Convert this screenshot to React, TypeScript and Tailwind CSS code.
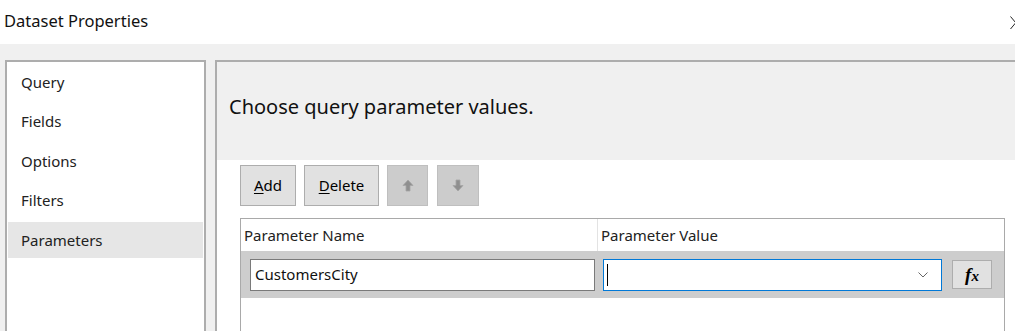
import React from "react";

const font = { fontFamily: '"Noto Sans", "Segoe UI", sans-serif' };

function Arrow({ up }: { up: boolean }) {
  return (
    <svg width="12" height="13" viewBox="0 0 12 13" className={up ? "" : "rotate-180"}>
      <path d="M6 1 L11 6.5 L8 6.5 L8 12 L4 12 L4 6.5 L1 6.5 Z" fill="#8f8f8f" stroke="#a5a5a5" strokeWidth="0.8" />
    </svg>
  );
}

export default function App() {
  const items = ["Query", "Fields", "Options", "Filters", "Parameters"];
  return (
    <div className="w-[1015px] h-[331px] overflow-hidden bg-[#f0f0f0] flex flex-col text-black" style={font}>
      <div className="h-[44px] shrink-0 bg-white flex items-center pl-[4px]">
        <span className="text-[16.5px] leading-none pb-[1px] text-[#111]">Dataset Properties</span>
        <svg width="12" height="14" viewBox="0 0 12 14" className="ml-auto mr-[-7px] mt-[1px]" >
          <path d="M0.5 0.5 L11 13 M11 0.5 L0.5 13" stroke="#222" strokeWidth="1" fill="none" />
        </svg>
      </div>
      <div className="flex-1 flex pt-[16px] pl-[5px] gap-[9px] min-h-0">
        <div className="w-[201px] shrink-0 bg-white border-2 border-[#adadad] border-b-0 flex flex-col gap-[3.5px] pt-[2px] px-[1px]">
          {items.map((it) => (
            <div
              key={it}
              className={`h-[36px] flex items-center pl-[13px] text-[15px] text-[#222] ${it === "Parameters" ? "bg-[#e6e6e6]" : ""}`}
            >
              {it}
            </div>
          ))}
        </div>
        <div className="flex-1 min-w-0 border-2 border-r-0 border-b-0 border-[#adadad] flex flex-col mr-[-20px]">
          <div className="h-[98px] shrink-0 bg-[#f0f0f0] flex items-center pl-[12px] pb-[8px]">
            <span className="text-[20px] text-[#111]">Choose query parameter values.</span>
          </div>
          <div className="flex-1 bg-white pl-[23px] pt-[5px] flex flex-col">
            <div className="flex h-[41px]">
              <button className="w-[56px] h-[41px] bg-[#e1e1e1] border border-[#adadad] text-[15px] flex items-center justify-center">
                <span><span className="underline underline-offset-2">A</span>dd</span>
              </button>
              <button className="ml-[8px] w-[75px] h-[41px] bg-[#e1e1e1] border border-[#adadad] text-[15px] flex items-center justify-center">
                <span><span className="underline underline-offset-2">D</span>elete</span>
              </button>
              <button className="ml-[8px] w-[41px] h-[41px] bg-[#cccccc] border border-[#bfbfbf] flex items-center justify-center">
                <Arrow up />
              </button>
              <button className="ml-[9px] w-[42px] h-[41px] bg-[#cccccc] border border-[#bfbfbf] flex items-center justify-center">
                <Arrow up={false} />
              </button>
            </div>
            <div className="mt-[12px] w-[765px] flex-1 border border-b-0 border-[#a9a9a9] flex flex-col">
              <div className="h-[32px] flex shrink-0">
                <div className="w-[357px] border-r border-[#e3e3e3] pl-[3px] flex items-center text-[15px] text-[#222]">Parameter Name</div>
                <div className="flex-1 pl-[3px] flex items-center text-[15px] text-[#222]">Parameter Value</div>
              </div>
              <div className="h-[47px] bg-[#cdcdcd] flex items-center shrink-0">
                <div className="ml-[9px] w-[345px] h-[32px] bg-white border border-[#7a7a7a] flex items-center pl-[4px] text-[15px] text-[#111]">
                  CustomersCity
                </div>
                <div className="ml-[8px] w-[339px] h-[32px] bg-white border border-[#0078d7] flex items-center pl-[3px]">
                  <div className="w-[1px] h-[22px] bg-black" />
                  <svg width="10" height="6" viewBox="0 0 10 6" className="ml-auto mr-[13px]">
                    <path d="M0.5 0.5 L5 5 L9.5 0.5" stroke="#666" strokeWidth="1" fill="none" />
                  </svg>
                </div>
                <button className="ml-[10px] w-[40px] h-[29px] bg-[#e1e1e1] border border-[#adadad] flex items-center justify-center">
                  <span className="text-[19px] font-bold italic leading-none" style={{ fontFamily: '"Liberation Serif", serif' }}>
                    f<span className="text-[15px]">x</span>
                  </span>
                </button>
              </div>
              <div className="flex-1 bg-white" />
            </div>
          </div>
        </div>
      </div>
    </div>
  );
}
